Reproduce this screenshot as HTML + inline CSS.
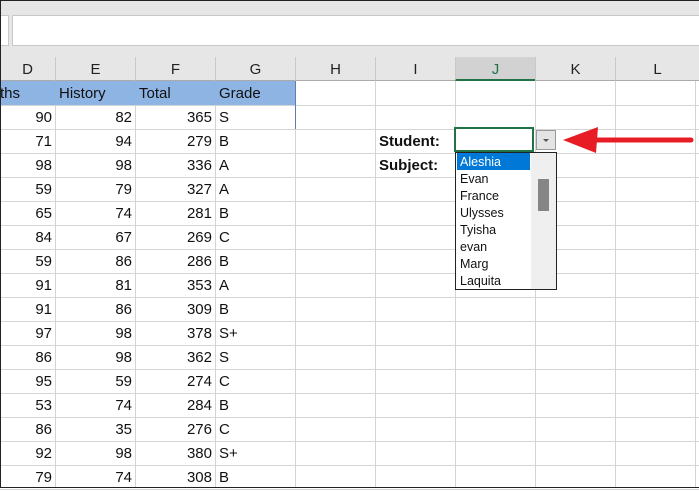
<!DOCTYPE html>
<html><head><style>
body{margin:0;width:699px;height:488px;overflow:hidden;background:#fff;font-family:"Liberation Sans",sans-serif;position:relative}
.a{position:absolute}
.top{left:0;top:0;width:699px;height:57px;background:#e6e6e6}
.hd{top:57px;height:24px;background:#e6e6e6;border-bottom:1px solid #ababab;box-sizing:border-box;font-size:15px;text-align:center;line-height:26px;color:#222}
.vl{width:1px;background:#d4d4d4;top:81px;height:407px}
.hl{height:1px;background:#d4d4d4;left:0;width:699px}
.c{font-size:15px;line-height:26px;color:#111}
.r{text-align:right}
.li{left:460px;font-size:12.5px;color:#111;height:17px;line-height:19px}
</style></head><body>
<div class="a top"></div>
<div class="a" style="left:0;top:15px;width:8px;height:29px;background:#fff;border:1px solid #c8c8c8;border-left:none"></div>
<div class="a" style="left:12px;top:15px;width:690px;height:29px;background:#fff;border:1px solid #c8c8c8"></div>
<div class="a hd" style="left:0;width:55px">D</div>
<div class="a hd" style="left:55px;width:80px;border-left:1px solid #c8c8c8">E</div>
<div class="a hd" style="left:135px;width:80px;border-left:1px solid #c8c8c8">F</div>
<div class="a hd" style="left:215px;width:80px;border-left:1px solid #c8c8c8">G</div>
<div class="a hd" style="left:295px;width:80px;border-left:1px solid #c8c8c8">H</div>
<div class="a hd" style="left:375px;width:80px;border-left:1px solid #c8c8c8">I</div>
<div class="a hd" style="left:455px;width:80px;border-left:1px solid #c8c8c8;background:#d2d2d2;border-bottom:2px solid #217346;color:#217346">J</div>
<div class="a hd" style="left:535px;width:80px;border-left:1px solid #c8c8c8">K</div>
<div class="a hd" style="left:615px;width:84px;border-left:1px solid #c8c8c8">L</div>
<div class="a vl" style="left:55px"></div><div class="a vl" style="left:135px"></div><div class="a vl" style="left:215px"></div><div class="a vl" style="left:295px"></div><div class="a vl" style="left:375px"></div><div class="a vl" style="left:455px"></div><div class="a vl" style="left:535px"></div><div class="a vl" style="left:615px"></div><div class="a vl" style="left:695px"></div>
<div id="g"></div>
<div class="a" style="left:0;top:81px;width:295px;height:24px;background:#8eb4e3"></div>
<div class="a" style="left:295px;top:81px;width:1px;height:48px;background:#5b7fb0"></div>
<div class="a c" style="left:0;top:81px">ths</div>
<div class="a c" style="left:59px;top:81px">History</div>
<div class="a c" style="left:139px;top:81px">Total</div>
<div class="a c" style="left:219px;top:81px">Grade</div>
<script>
var d=[[90,82,365,'S'],[71,94,279,'B'],[98,98,336,'A'],[59,79,327,'A'],[65,74,281,'B'],[84,67,269,'C'],[59,86,286,'B'],[91,81,353,'A'],[91,86,309,'B'],[97,98,378,'S+'],[86,98,362,'S'],[95,59,274,'C'],[53,74,284,'B'],[86,35,276,'C'],[92,98,380,'S+'],[79,74,308,'B']];
var h='';
for(var i=0;i<17;i++){h+='<div class="a hl" style="top:'+(105+24*i)+'px"></div>';}
for(var i=0;i<d.length;i++){var t=105+24*i;
h+='<div class="a c r" style="left:0;width:52px;top:'+t+'px">'+d[i][0]+'</div>';
h+='<div class="a c r" style="left:55px;width:77px;top:'+t+'px">'+d[i][1]+'</div>';
h+='<div class="a c r" style="left:135px;width:77px;top:'+t+'px">'+d[i][2]+'</div>';
h+='<div class="a c" style="left:219px;top:'+t+'px">'+d[i][3]+'</div>';}
document.getElementById('g').innerHTML=h;
</script>
<div class="a c" style="left:379px;top:129px;font-weight:bold">Student:</div>
<div class="a c" style="left:379px;top:153px;font-weight:bold">Subject:</div>
<div class="a" style="left:454px;top:127px;width:80px;height:25px;border:2px solid #217346;box-sizing:border-box;background:#fff"></div>
<div class="a" style="left:536px;top:130px;width:20px;height:20px;border:1px solid #999;box-sizing:border-box;background:#e4e4e4"></div>
<div class="a" style="left:543px;top:139px;width:0;height:0;border-left:3px solid transparent;border-right:3px solid transparent;border-top:3px solid #555"></div>
<div class="a" style="left:455px;top:152px;width:102px;height:138px;border:1px solid #222;box-sizing:border-box;background:#fff"></div>
<div class="a" style="left:531px;top:153px;width:25px;height:136px;background:#efefef"></div>
<div class="a" style="left:538px;top:179px;width:11px;height:32px;background:#868686"></div>
<div class="a" style="left:457px;top:153px;width:73px;height:17px;background:#0078d7"></div>
<div class="a li" style="top:153px;color:#fff">Aleshia</div>
<div class="a li" style="top:170px">Evan</div>
<div class="a li" style="top:187px">France</div>
<div class="a li" style="top:204px">Ulysses</div>
<div class="a li" style="top:221px">Tyisha</div>
<div class="a li" style="top:238px">evan</div>
<div class="a li" style="top:255px">Marg</div>
<div class="a li" style="top:272px">Laquita</div>
<svg class="a" style="left:560px;top:124px" width="139" height="32"><line x1="30" y1="16" x2="131" y2="16" stroke="#e81c24" stroke-width="5" stroke-linecap="round"/><polygon points="3,16 38,3 36,29" fill="#e81c24"/></svg>
<div class="a" style="left:0;top:0;width:699px;height:488px;border:1px solid #222;box-sizing:border-box;border-right:none"></div>
</body></html>
